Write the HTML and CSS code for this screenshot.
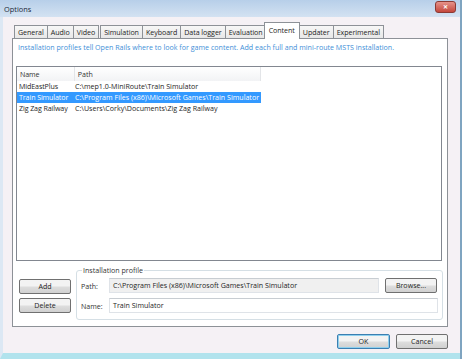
FILE: index.html
```html
<!DOCTYPE html>
<html lang="en">
<head>
    <meta charset="UTF-8">
    <meta name="viewport" content="width=device-width, initial-scale=1.0">
    <title>Options</title>
    <link rel="stylesheet" href="styles.css">
</head>
<body>
    <div class="window">
        <div class="titlebar">
            <span class="title">Options</span>
            <span class="close">&#x2715;</span>
        </div>
        <div class="client">
            <div class="tabs">
                <span class="tab">General</span>
                <span class="tab">Audio</span>
                <span class="tab">Video</span>
                <span class="tab gap">Simulation</span>
                <span class="tab">Keyboard</span>
                <span class="tab">Data logger</span>
                <span class="tab">Evaluation</span>
                <span class="tab active">Content</span>
                <span class="tab">Updater</span>
                <span class="tab">Experimental</span>
            </div>
            <div class="panel">
                <p class="hint">Installation profiles tell Open Rails where to look for game content. Add each full and mini-route MSTS installation.</p>
                <div class="list">
                    <div class="row header">
                        <span class="col-name">Name</span>
                        <span class="col-path">Path</span>
                    </div>
                    <div class="row">
                        <span class="col-name">MidEastPlus</span>
                        <span class="col-path">C:\mep1.0-MiniRoute\Train Simulator</span>
                    </div>
                    <div class="row selected">
                        <span class="col-name">Train Simulator</span>
                        <span class="col-path">C:\Program Files (x86)\Microsoft Games\Train Simulator</span>
                    </div>
                    <div class="row">
                        <span class="col-name">Zig Zag Railway</span>
                        <span class="col-path">C:\Users\Corky\Documents\Zig Zag Railway</span>
                    </div>
                </div>
                <div class="bottom">
                    <div class="side-buttons">
                        <span class="button">Add</span>
                        <span class="button">Delete</span>
                    </div>
                    <fieldset class="profile">
                        <legend>Installation profile</legend>
                        <div class="field">
                            <span class="label">Path:</span>
                            <span class="textbox readonly path-box">C:\Program Files (x86)\Microsoft Games\Train Simulator</span>
                            <span class="button browse">Browse...</span>
                        </div>
                        <div class="field">
                            <span class="label">Name:</span>
                            <span class="textbox name-box">Train Simulator</span>
                        </div>
                    </fieldset>
                </div>
            </div>
            <div class="dialog-buttons">
                <span class="button default">OK</span>
                <span class="button">Cancel</span>
            </div>
        </div>
    </div>
</body>
</html>
```

FILE: styles.css
```css
body {
    margin: 0;
    background: #fff;
    font-family: "Open Sans", "Noto Sans", sans-serif;
    font-size: 7.1px;
    color: #1e1e1e;
}

.window {
    width: 460px;
    border-right: 2px solid #7fa4c0;
}

.titlebar {
    height: 17px;
    background: linear-gradient(#b7cfe9, #d3e2f2);
    display: flex;
    align-items: center;
    justify-content: space-between;
    padding: 0 4px 0 4px;
}

.title {
    font-size: 7.4px;
    color: #1b2a3a;
}

.close {
    width: 19px;
    height: 10px;
    margin-top: -4px;
    border: 1px solid #8b3a34;
    border-radius: 3px;
    background: linear-gradient(#e6928a, #c4473c);
    color: #fff;
    font-size: 6px;
    font-weight: bold;
    line-height: 10px;
    text-align: center;
}

.client {
    height: 336px;
    border-left: 3px solid #dce8f4;
    border-bottom: 6px solid #b1e3ed;
    background: #f5f1f5;
    display: flex;
    flex-direction: column;
}

.tabs {
    display: flex;
    align-items: flex-end;
    height: 16px;
    margin: 6px 0 -1px 11px;
}

.tab {
    height: 13px;
    line-height: 13px;
    padding: 0 3px;
    border: 1px solid #8d9197;
    border-bottom: none;
    margin-right: -1px;
    background: linear-gradient(#f7f7f7, #e6e6e6);
    white-space: nowrap;
    letter-spacing: -0.05px;
}

.tab.gap {
    margin-left: 2px;
}

.tab.active {
    height: 16px;
    line-height: 14px;
    padding: 0 4px;
    margin: 0 -1px 0 -2px;
    background: #fff;
    position: relative;
    z-index: 1;
}

.panel {
    margin-left: 9px;
    width: 434px;
    height: 287px;
    border: 1px solid #8d9197;
    background: #fff;
    display: flex;
    flex-direction: column;
}

.hint {
    margin: 3px 0 0 5px;
    line-height: 10px;
    color: #3f8fd8;
    white-space: nowrap;
}

.list {
    margin: 14px 0 0 3px;
    width: 424px;
    height: 193px;
    border: 1px solid #828790;
}

.row {
    display: flex;
    height: 11px;
    line-height: 11px;
    width: 244px;
    white-space: nowrap;
}

.row.header {
    height: 14px;
    line-height: 14px;
    color: #333;
}

.row.header .col-name,
.row.header .col-path {
    background: linear-gradient(#ffffff, #f2f3f5);
    border-right: 1px solid #e3e5e8;
}

.col-name {
    width: 55px;
    padding-left: 2px;
    letter-spacing: -0.1px;
}

.col-path {
    width: 186px;
    padding-left: 1px;
    overflow: hidden;
}

.row.header .col-name {
    width: 54px;
    padding-left: 3px;
}

.row.header .col-path {
    padding-left: 3px;
    width: 183px;
}

.row.selected {
    background: #3399ff;
    color: #fff;
}

.bottom {
    display: flex;
    align-items: flex-start;
}

.side-buttons {
    display: flex;
    flex-direction: column;
    gap: 4px;
    margin: 18px 0 0 6px;
}

.button {
    display: block;
    box-sizing: border-box;
    width: 52px;
    height: 15px;
    line-height: 13px;
    text-align: center;
    border: 1px solid #707070;
    border-radius: 2px;
    background: linear-gradient(#f3f3f3 45%, #dddddd 55%, #d0d0d0);
    color: #1e1e1e;
}

.button.default {
    border-color: #3c7fb1;
    box-shadow: inset 0 0 0 1px #8fd0ee;
    width: 53px;
}

.profile {
    margin: 4px 0 0 5px;
    padding: 3px 4px 6px 4px;
    width: 356px;
    border: 1px solid #d5dfe5;
    border-radius: 3px;
}

.profile legend {
    padding: 0 1px;
    margin-left: 1px;
    line-height: 10px;
    color: #333;
}

.field {
    display: flex;
    align-items: center;
    height: 15px;
    margin-bottom: 5px;
}

.field:last-child {
    margin-bottom: 0;
}

.label {
    width: 28px;
    color: #333;
}

.textbox {
    box-sizing: border-box;
    height: 15px;
    line-height: 13px;
    padding-left: 3px;
    border: 1px solid #dfe3e8;
    border-top-color: #c8cdd2;
    white-space: nowrap;
    overflow: hidden;
}

.textbox.readonly {
    background: #f0f0f0;
}

.path-box {
    width: 270px;
    margin-right: 6px;
}

.name-box {
    width: 329px;
    background: #fff;
}

.dialog-buttons {
    display: flex;
    justify-content: flex-end;
    gap: 6px;
    margin: 7px 12px 0 0;
}
```
